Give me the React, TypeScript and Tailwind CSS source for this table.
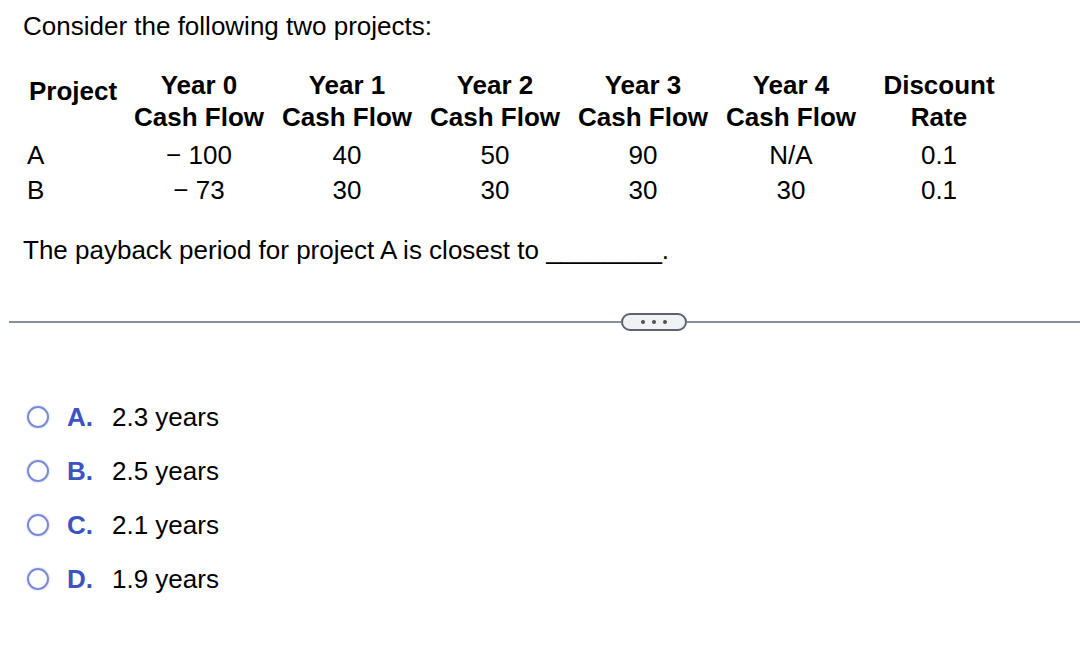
import React from "react";

const headers = ["Year 0", "Year 1", "Year 2", "Year 3", "Year 4"];

const rows = [
  { name: "A", values: ["\u2212 100", "40", "50", "90", "N/A", "0.1"] },
  { name: "B", values: ["\u2212 73", "30", "30", "30", "30", "0.1"] },
];

const options = [
  { letter: "A.", text: "2.3 years" },
  { letter: "B.", text: "2.5 years" },
  { letter: "C.", text: "2.1 years" },
  { letter: "D.", text: "1.9 years" },
];

const App: React.FC = () => {
  return (
    <div className="w-[1080px] h-[650px] overflow-hidden bg-white text-black text-[26px] leading-[32px] font-['Liberation_Sans',Arial,sans-serif]">
      {/* Intro */}
      <p className="pt-[10px] pl-[23px]">Consider the following two projects:</p>

      {/* Table */}
      <div className="mt-[27px] ml-[27px] grid grid-cols-[98px_repeat(6,148px)]">
        <div className="pt-[6px] font-bold pl-[2px]">Project</div>
        {headers.map((h) => (
          <div key={h} className="text-center font-bold">
            <div>{h}</div>
            <div>Cash Flow</div>
          </div>
        ))}
        <div className="text-center font-bold">
          <div>Discount</div>
          <div>Rate</div>
        </div>

        {rows.map((r, i) => (
          <React.Fragment key={r.name}>
            <div className={`leading-[35px] ${i === 0 ? "mt-[5px]" : ""}`}>{r.name}</div>
            {r.values.map((v, j) => (
              <div key={j} className={`text-center leading-[35px] ${i === 0 ? "mt-[5px]" : ""}`}>
                {v}
              </div>
            ))}
          </React.Fragment>
        ))}
      </div>

      {/* Question */}
      <p className="mt-[26px] pl-[23px]">
        The payback period for project A is closest to ________.
      </p>

      {/* Separator */}
      <div className="mt-[47px] ml-[9px] flex items-center h-[18px]">
        <div className="w-[612px] h-[2px] bg-[#8b8f9c]" />
        <div className="w-[66px] h-[18px] rounded-full border-2 border-[#5b6272] bg-[#f1f2f4] flex items-center justify-center gap-[7px]">
          <span className="w-[4px] h-[4px] rounded-full bg-[#4b505c]" />
          <span className="w-[4px] h-[4px] rounded-full bg-[#4b505c]" />
          <span className="w-[4px] h-[4px] rounded-full bg-[#4b505c]" />
        </div>
        <div className="flex-1 h-[2px] bg-[#8b8f9c]" />
      </div>

      {/* Options */}
      <div className="mt-[59px] pl-[27px]">
        {options.map((o) => (
          <div key={o.letter} className="flex items-center h-[54px]">
            <span className="w-[22px] h-[22px] rounded-full border-2 border-[#7a8ad9] shadow-[0_0_2px_rgba(122,138,217,0.6)] shrink-0" />
            <span className="ml-[18px] w-[45px] font-bold text-[#3b54c2]">{o.letter}</span>
            <span>{o.text}</span>
          </div>
        ))}
      </div>
    </div>
  );
};

export default App;
